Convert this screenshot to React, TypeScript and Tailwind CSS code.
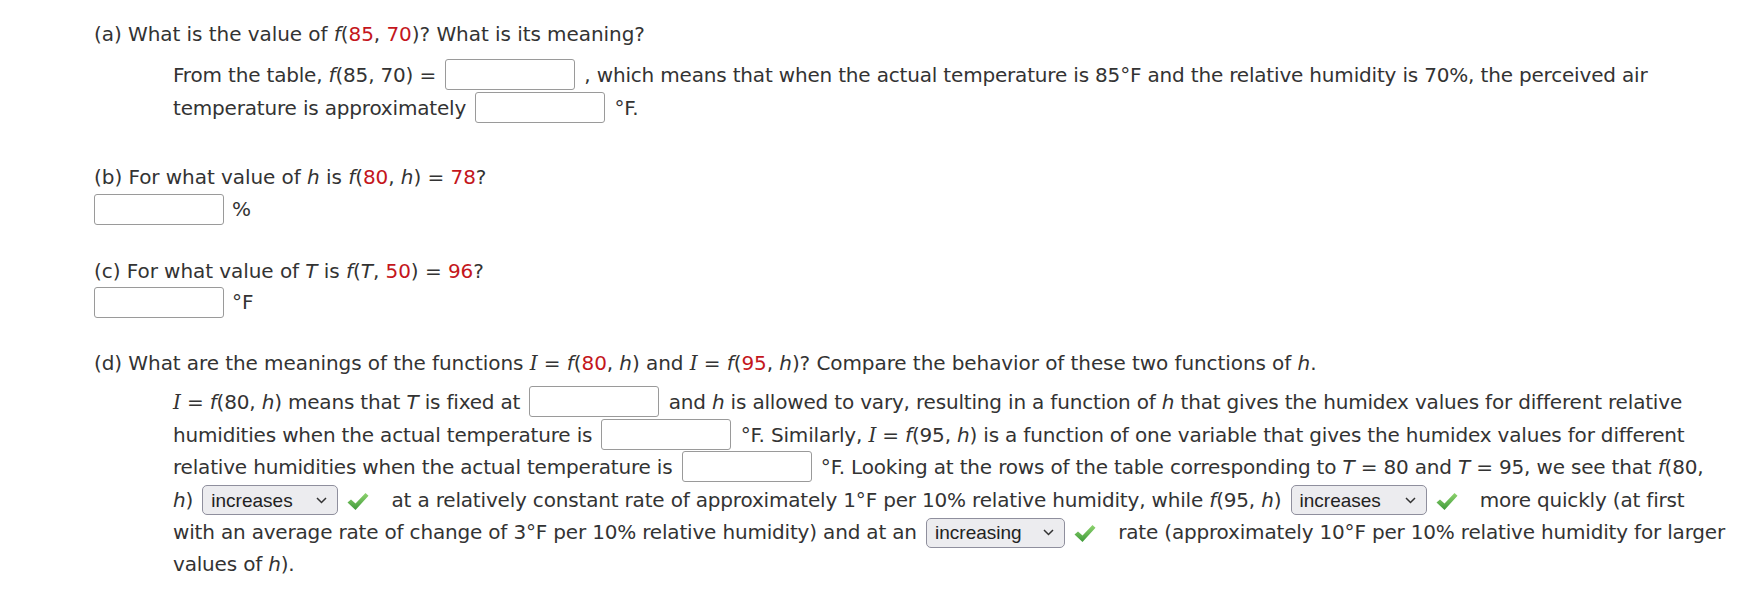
import React from "react";

const Red = ({ children }: { children: React.ReactNode }) => (
  <span className="text-[#c4161c]">{children}</span>
);

const V = ({ children }: { children: React.ReactNode }) => (
  <span className="italic">{children}</span>
);

// the serif-ish italic I used for the humidex function
const BigI = () => <span className="italic font-['DejaVu_Serif',serif]">I</span>;

const Blank = () => (
  <span className="inline-block align-[-8px] w-[130px] h-[31px] mx-[3px] bg-white border border-[#9a9a9a] rounded-[3px]" />
);

const Dropdown = ({ value, width }: { value: string; width: string }) => (
  <span
    className={`inline-flex items-center justify-between h-[30px] ${width} mx-[3px] pl-[8px] pr-[10px] bg-[#ececef] border border-[#8f8f9d] rounded-[5px] font-['Liberation_Sans',Arial,sans-serif] text-[19px] tracking-normal text-[#222] leading-none`}
  >
    {value}
    <svg width="11" height="7" viewBox="0 0 11 7" className="ml-2">
      <path d="M1 1 L5.5 5.5 L10 1" fill="none" stroke="#333" strokeWidth="1.5" />
    </svg>
  </span>
);

const Check = () => (
  <svg width="22" height="19" viewBox="0 0 22 19" className="inline-block align-middle ml-[6px] mr-[16px]">
    <defs>
      <linearGradient id="chk" x1="0" y1="0" x2="0" y2="1">
        <stop offset="0" stopColor="#8fd46f" />
        <stop offset="1" stopColor="#3f9a3a" />
      </linearGradient>
    </defs>
    <path d="M0.5 10.5 L4 7.5 L8.5 11.5 L18.5 1 L21.5 3.8 L8.5 18 Z" fill="url(#chk)" />
  </svg>
);

const App = () => {
  return (
    <div className="min-h-screen bg-white pl-[94px] pr-[12px] pt-[18px] font-['DejaVu_Sans',Verdana,sans-serif] text-[20px] leading-[32.4px] text-[#333]">
      {/* (a) */}
      <p className="tracking-[-0.06px]">
        (a) What is the value of <V>f</V>(<Red>85</Red>, <Red>70</Red>)? What is its meaning?
      </p>
      <p className="mt-[9px] pl-[79px] tracking-[-0.18px]">
        From the table, <V>f</V>(85, 70) = <Blank /> , which means that when the actual temperature is
        85°F and the relative humidity is 70%, the perceived air temperature is approximately <Blank /> °F.
      </p>

      {/* (b) */}
      <p className="mt-[37px] tracking-[-0.06px]">
        (b) For what value of <V>h</V> is <V>f</V>(<Red>80</Red>, <V>h</V>) = <Red>78</Red>?
      </p>
      <div className="flex items-center gap-[8px] h-[31px]">
        <span className="w-[130px] h-[31px] bg-white border border-[#9a9a9a] rounded-[3px]" />
        <span>%</span>
      </div>

      {/* (c) */}
      <p className="mt-[30px] tracking-[-0.06px]">
        (c) For what value of <V>T</V> is <V>f</V>(<V>T</V>, <Red>50</Red>) = <Red>96</Red>?
      </p>
      <div className="flex items-center gap-[8px] h-[31px]">
        <span className="w-[130px] h-[31px] bg-white border border-[#9a9a9a] rounded-[3px]" />
        <span>°F</span>
      </div>

      {/* (d) */}
      <p className="mt-[29px] tracking-[-0.08px]">
        (d) What are the meanings of the functions <BigI /> = <V>f</V>(<Red>80</Red>, <V>h</V>) and <BigI /> ={" "}
        <V>f</V>(<Red>95</Red>, <V>h</V>)? Compare the behavior of these two functions of <V>h</V>.
      </p>
      <p className="mt-[7px] pl-[79px] tracking-[-0.18px]">
        <BigI /> = <V>f</V>(80, <V>h</V>) means that <V>T</V> is fixed at <Blank /> and <V>h</V> is allowed to
        vary, resulting in a function of <V>h</V> that gives the humidex values for different relative
        humidities when the actual temperature is <Blank /> °F. Similarly, <BigI /> = <V>f</V>(95, <V>h</V>) is a
        function of one variable that gives the humidex values for different relative humidities when the
        actual temperature is <Blank /> °F. Looking at the rows of the table corresponding to <V>T</V> = 80 and{" "}
        <V>T</V> = 95, we see that <V>f</V>(80,
        <br />
        <V>h</V>) <Dropdown value="increases" width="w-[136px]" />
        <Check /> at a relatively constant rate of approximately 1°F per 10% relative humidity, while{" "}
        <V>f</V>(95, <V>h</V>) <Dropdown value="increases" width="w-[136px]" />
        <Check /> more quickly (at first
        <br />
        with an average rate of change of 3°F per 10% relative humidity) and at an{" "}
        <Dropdown value="increasing" width="w-[139px]" />
        <Check /> rate (approximately 10°F per 10% relative humidity for larger values of <V>h</V>).
      </p>
    </div>
  );
};

export default App;
